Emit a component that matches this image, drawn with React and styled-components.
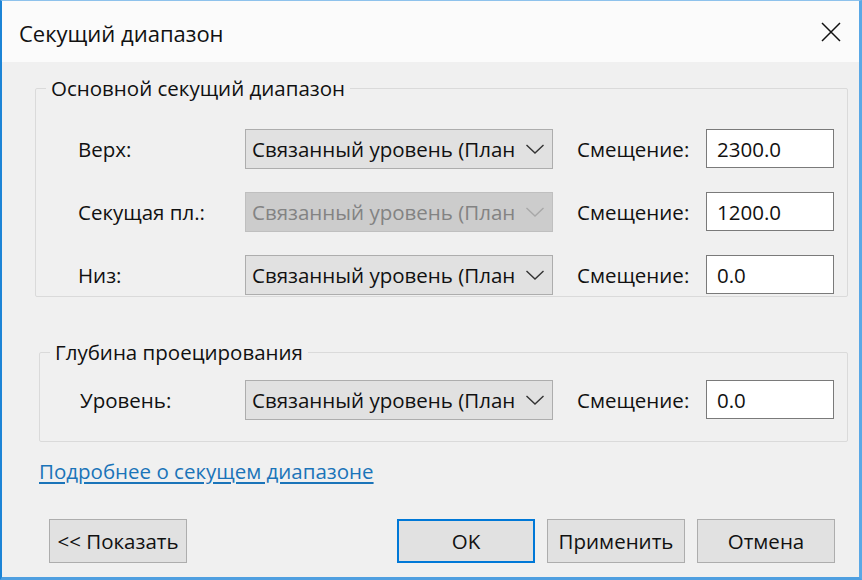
import styled, { createGlobalStyle } from 'styled-components'

const GlobalStyle = createGlobalStyle`
  html, body {
    margin: 0;
    padding: 0;
    background: #f0f0f0;
  }
  body {
    font-family: "Open Sans", "Noto Sans", sans-serif;
    color: #000;
  }
`

const rows = [
  { label: 'Верх:', offset: '2300.0' },
  { label: 'Секущая пл.:', offset: '1200.0', disabled: true },
  { label: 'Низ:', offset: '0.0' },
]

const Chevron = ({ color }) => (
  <svg width="20" height="12" viewBox="0 0 20 12">
    <polyline points="1.5,2 10,10 18.5,2" fill="none" stroke={color} strokeWidth="1.4" />
  </svg>
)

const Combo = ({ disabled }) => (
  <ComboBox disabled={disabled}>
    <ComboText>Связанный уровень (План</ComboText>
    <Chevron color={disabled ? '#a8a8a8' : '#333'} />
  </ComboBox>
)

// labelWidth: distance from the group border to the combo box
const FieldRow = ({ label, offset, disabled, indent, labelWidth }) => (
  <Row>
    <Label $indent={indent} $width={labelWidth}>{label}</Label>
    <Combo disabled={disabled} />
    <OffsetLabel>Смещение:</OffsetLabel>
    <Input>{offset}</Input>
  </Row>
)

const App = () => {
  return (
    <>
      <GlobalStyle />
      <Window>
        <TitleBar>
          <Title>Секущий диапазон</Title>
          <Close>
            <svg width="20" height="20" viewBox="0 0 20 20">
              <path d="M1 1 L19 19 M19 1 L1 19" stroke="#111" strokeWidth="1.5" fill="none" />
            </svg>
          </Close>
        </TitleBar>

        <Body>
          <Group>
            <Legend>Основной секущий диапазон</Legend>
            <Rows>
              {rows.map(r => <FieldRow key={r.label} {...r} indent={42} labelWidth={209} />)}
            </Rows>
          </Group>

          <Group $second>
            <Legend>Глубина проецирования</Legend>
            <Rows>
              <FieldRow label="Уровень:" offset="0.0" indent={40} labelWidth={205} />
            </Rows>
          </Group>

          <Link href="#">Подробнее о секущем диапазоне</Link>

          <Footer>
            <Button>&lt;&lt; Показать</Button>
            <Spacer />
            <Button $primary>OK</Button>
            <Button>Применить</Button>
            <Button>Отмена</Button>
          </Footer>
        </Body>
      </Window>
    </>
  )
}

const Window = styled.div`
  box-sizing: border-box;
  width: 862px;
  height: 580px;
  display: flex;
  flex-direction: column;
  border-left: 2px solid #1c84d6;
  border-right: 3px solid #5aa8e6;
  border-bottom: 3px solid #4f9fe0;
  border-top: 1px solid #8ec2ec;
  background: #f0f0f0;
  overflow: hidden;
`

const TitleBar = styled.div`
  height: 61px;
  flex-shrink: 0;
  display: flex;
  align-items: center;
  justify-content: space-between;
  background: #fbfbfb;
  padding: 0 18px 0 17px;
`

const Title = styled.div`
  font-size: 22px;
  color: #111;
  margin-top: 2px;
`

const Close = styled.div`
  display: flex;
  align-items: center;
  margin-top: 1px;
`

const Body = styled.div`
  flex: 1;
  display: flex;
  flex-direction: column;
  padding: 12px 11px 0 33px;
`

const Group = styled.fieldset`
  margin: ${p => (p.$second ? '41px 0 0 4px' : '0')};
  padding: ${p => (p.$second ? '14px 0 22px 0' : '27px 0 0 0')};
  border: 1px solid #dadada;
  border-radius: 2px;
  min-width: 0;
  height: ${p => (p.$second ? 'auto' : '223px')};
  box-sizing: border-box;
`

const Legend = styled.legend`
  font-size: 20.5px;
  padding: 0 5px;
  margin-left: 10px;
  color: #111;
`

const Rows = styled.div`
  display: flex;
  flex-direction: column;
  gap: 24px;
`

const Row = styled.div`
  display: flex;
  align-items: center;
  height: 39px;
  font-size: 20.5px;
  color: #111;
`

const Label = styled.div`
  box-sizing: border-box;
  width: ${p => p.$width}px;
  padding-left: ${p => p.$indent}px;
  flex-shrink: 0;
  white-space: nowrap;
`

const ComboBox = styled.div`
  box-sizing: border-box;
  width: 308px;
  height: 40px;
  flex-shrink: 0;
  display: flex;
  align-items: center;
  gap: 8px;
  padding: 0 7px 0 6px;
  background: ${p => (p.disabled ? '#cccccc' : '#e1e1e1')};
  border: 1px solid ${p => (p.disabled ? '#bfbfbf' : '#adadad')};
  color: ${p => (p.disabled ? '#838383' : '#111')};
`

const ComboText = styled.span`
  flex: 1;
  overflow: hidden;
  white-space: nowrap;
`

const OffsetLabel = styled.div`
  margin-left: 24px;
  width: 129px;
  flex-shrink: 0;
  white-space: nowrap;
`

const Input = styled.div`
  box-sizing: border-box;
  width: 128px;
  height: 39px;
  flex-shrink: 0;
  background: #fff;
  border: 1px solid #7a7a7a;
  padding: 0 10px;
  display: flex;
  align-items: center;
`

const Link = styled.a`
  margin: 15px 0 0 4px;
  font-size: 20.5px;
  color: #1a74b9;
  text-decoration: underline;
  text-underline-offset: 3px;
  align-self: flex-start;
`

const Footer = styled.div`
  display: flex;
  gap: 12px;
  margin: 34px 13px 0 14px;
`

const Spacer = styled.div`
  flex: 1;
`

const Button = styled.button`
  box-sizing: border-box;
  width: 138px;
  height: 44px;
  font-family: inherit;
  font-size: 20.5px;
  color: #111;
  background: #e1e1e1;
  border: ${p => (p.$primary ? '2px solid #0078d7' : '1px solid #adadad')};
  padding: 0;
  cursor: pointer;
`

export default App
